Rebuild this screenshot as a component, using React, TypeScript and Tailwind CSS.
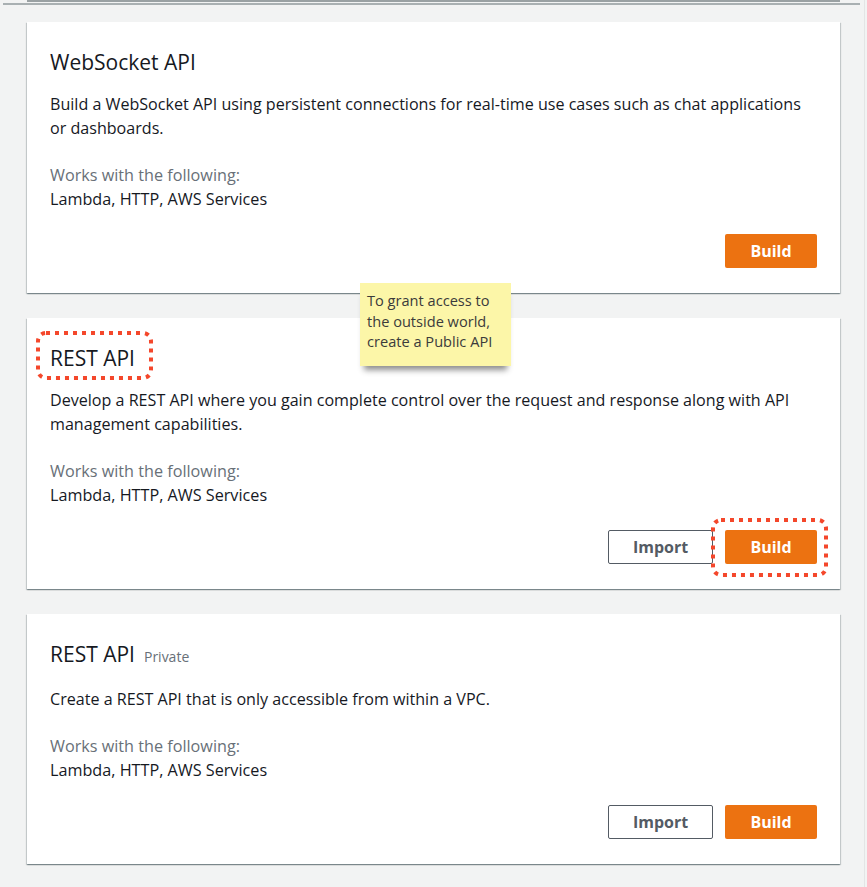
import React from "react";

const shadow =
  "shadow-[0_1px_1px_0_rgba(0,28,36,0.3),1px_1px_1px_0_rgba(0,28,36,0.15),-1px_1px_1px_0_rgba(0,28,36,0.15)]";

function Buttons({ importBtn }: { importBtn?: boolean }) {
  return (
    <div className="flex justify-end gap-[12px]">
      {importBtn && (
        <button className="w-[105px] h-[34px] border border-[#545b64] rounded-[2px] bg-white text-[#545b64] text-[16px] font-bold">
          Import
        </button>
      )}
      <button className="w-[92px] h-[34px] rounded-[2px] bg-[#ec7211] text-white text-[16px] font-bold">
        Build
      </button>
    </div>
  );
}

function Card({
  title,
  tag,
  desc,
  importBtn,
}: {
  title: string;
  tag?: string;
  desc: string;
  importBtn?: boolean;
}) {
  return (
    <div className={`bg-white px-[23px] pt-[26px] pb-[25px] ${shadow}`}>
      <h2 className="text-[21px] leading-[28px] text-[#16191f]">
        {title}
        {tag && <span className="ml-[9px] text-[14px] text-[#687078]">{tag}</span>}
      </h2>
      <p className="mt-[16px] text-[16.1px] leading-[24px] text-[#16191f] pr-[10px]">{desc}</p>
      <div className="mt-[23px] text-[16.2px] leading-[24px]">
        <div className="text-[#687078]">Works with the following:</div>
        <div className="text-[#16191f]">Lambda, HTTP, AWS Services</div>
      </div>
      <div className="mt-[23px]">
        <Buttons importBtn={importBtn} />
      </div>
    </div>
  );
}

function DottedBox({ left, top, w, h }: { left: number; top: number; w: number; h: number }) {
  return (
    <svg
      className="absolute pointer-events-none"
      style={{ left, top }}
      width={w}
      height={h}
      viewBox={`0 0 ${w} ${h}`}
    >
      <rect
        x={2}
        y={2}
        width={w - 4}
        height={h - 4}
        rx={8}
        fill="none"
        stroke="#f4472b"
        strokeWidth={4}
        strokeDasharray="4 5"
      />
    </svg>
  );
}

export default function App() {
  return (
    <div
      className="relative min-h-[887px] w-full bg-[#f2f3f3] overflow-hidden"
      style={{ fontFamily: "'Open Sans', 'Noto Sans', sans-serif" }}
    >
      <div className="h-[2px] ml-[27px] mr-[27px] bg-[#9aa1a3]" />
      <div className="h-[1px]" />
      <div className="h-[2px] ml-[3px] mr-[7px] bg-[#a9b0b2]" />
      <div className="absolute right-[2px] top-0 bottom-0 w-px bg-[#e3e5e5]" />
      <div className="px-[27px] pt-[17px] flex flex-col gap-[25px]">
        <Card
          title="WebSocket API"
          desc="Build a WebSocket API using persistent connections for real-time use cases such as chat applications or dashboards."
        />
        <Card
          title="REST API"
          desc="Develop a REST API where you gain complete control over the request and response along with API management capabilities."
          importBtn
        />
        <Card
          title="REST API"
          tag="Private"
          desc="Create a REST API that is only accessible from within a VPC."
          importBtn
        />
      </div>

      <div className="absolute left-[360px] top-[283px] w-[151px] h-[83px] bg-[#fcf6a8] px-[7px] pt-[7px] text-[14.6px] leading-[20.5px] text-[#3b3b3b] shadow-[0_8px_6px_-4px_rgba(0,0,0,0.45)]">
        To grant access to
        <br />
        the outside world,
        <br />
        create a Public API
      </div>

      <DottedBox left={36} top={331} w={117} h={49} />
      <DottedBox left={711} top={518} w={117} h={59} />
    </div>
  );
}
